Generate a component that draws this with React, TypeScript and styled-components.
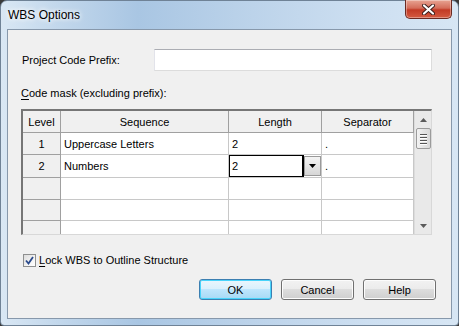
import React from "react";
import styled, { createGlobalStyle, css } from "styled-components";

const Global = createGlobalStyle`
  html, body { margin: 0; padding: 0; background: #3a3a3a; }
  body { font-family: "Liberation Sans", Arial, sans-serif; font-size: 11px; color: #000; }
  * { box-sizing: border-box; }
`;

const Window = styled.div`
  width: 459px;
  height: 326px;
  border-radius: 7px 7px 4px 4px;
  background: linear-gradient(90deg, #d9e7f4 0%, #c3d8ec 12%, #a9c6e3 30%, #bcd3ea 55%, #cddff1 80%, #d7e6f4 100%);
  border: 1px solid #6f8296;
  padding: 0 6px 6px 6px;
  display: flex;
  flex-direction: column;
`;

const TitleBar = styled.div`
  height: 28px;
  display: flex;
  justify-content: space-between;
  align-items: flex-start;
`;

const Title = styled.div`
  margin-top: 7px;
  padding-left: 1px;
  font-size: 12px;
  color: #000;
  text-shadow: 0 0 6px #fff, 0 0 4px #fff;
`;

const CloseButton = styled.div`
  width: 47px;
  height: 19px;
  margin-top: -1px;
  border: 1px solid #6b2a22;
  border-top: none;
  border-radius: 0 0 5px 5px;
  background: linear-gradient(180deg, #e8a493 0%, #d46d5a 45%, #c23a25 55%, #d45a40 100%);
  display: flex;
  align-items: center;
  justify-content: center;
  box-shadow: inset 0 0 0 1px rgba(255,255,255,0.35);
`;

const Client = styled.div`
  flex: 1;
  background: #f0f0f0;
  border: 1px solid #8798ab;
  display: flex;
  flex-direction: column;
  padding: 0 19px 0 13px;
`;

const PrefixRow = styled.div`
  margin-top: 19px;
  display: flex;
  align-items: center;
  justify-content: space-between;
  padding-left: 1px;
`;

const Label = styled.span`
  white-space: nowrap;
`;

const TextBox = styled.div`
  width: 278px;
  height: 22px;
  background: #fff;
  border: 1px solid #dcdcdc;
  border-top-color: #abadb3;
  border-left-color: #e2e3ea;
`;

const U = styled.span`
  text-decoration: underline;
  text-underline-offset: 2px;
`;

const MaskLabel = styled.div`
  margin-top: 14px;
  height: 16px;
  line-height: 16px;
`;

const GridFrame = styled.div`
  margin-top: 8px;
  width: 411px;
  height: 126px;
  border-top: 2px solid #767676;
  border-left: 2px solid #767676;
  border-right: 1px solid #d8d8d8;
  border-bottom: 1px solid #d8d8d8;
  display: flex;
  overflow: hidden;
`;

const Table = styled.div`
  display: grid;
  grid-template-columns: 38px 168px 93px 92px;
  grid-template-rows: 22px 22px 23px 22px 21px 22px;
  background: #fff;
`;

const Cell = styled.div<{ $head?: boolean; $gray?: boolean; $align?: string }>`
  border-right: 1px solid #c8c8c8;
  border-bottom: 1px solid #c8c8c8;
  display: flex;
  align-items: center;
  justify-content: ${(p) => p.$align || "flex-start"};
  padding: 0 3px;
  white-space: nowrap;
  overflow: hidden;
  position: relative;
  ${(p) =>
    (p.$head || p.$gray) &&
    css`
      background: #f0f0f0;
      border-right-color: #a0a0a0;
      border-bottom-color: #a0a0a0;
    `}
`;

const Editor = styled.div`
  position: absolute;
  inset: 0 -1px 0 0;
  display: flex;
`;

const EditBox = styled.div`
  flex: 1;
  border: 1px solid #000;
  border-right-width: 2px;
  background: #fff;
  display: flex;
  align-items: center;
  padding-left: 2px;
`;

const DropButton = styled.div`
  width: 17px;
  margin: 1px 1px 1px 0;
  border: 1px solid #9a9a9a;
  background: linear-gradient(180deg, #f4f4f4 0%, #e6e6e6 50%, #d6d6d6 100%);
  display: flex;
  align-items: center;
  justify-content: center;
`;

const ScrollBar = styled.div`
  width: 18px;
  background: #e9e9e9;
  border-left: 1px solid #dcdcdc;
  display: flex;
  flex-direction: column;
  align-items: center;
`;

const ArrowBox = styled.div`
  height: 17px;
  width: 100%;
  display: flex;
  align-items: center;
  justify-content: center;
`;

const Thumb = styled.div`
  width: 15px;
  height: 21px;
  border: 1px solid #9b9b9b;
  border-radius: 2px;
  background: linear-gradient(90deg, #f3f3f3 0%, #e4e4e4 50%, #d9d9d9 100%);
  display: flex;
  flex-direction: column;
  align-items: center;
  justify-content: center;
  gap: 2px;
`;

const Grip = styled.div`
  width: 7px;
  height: 1px;
  background: #555;
  box-shadow: 0 1px 0 #fff;
`;

const Spacer = styled.div`
  flex: 1;
`;

const CheckRow = styled.label`
  margin-top: 17px;
  height: 16px;
  display: flex;
  align-items: center;
  gap: 3px;
  padding-left: 2px;
`;

const CheckBox = styled.div`
  width: 13px;
  height: 13px;
  border: 1px solid #8e8f8f;
  background: linear-gradient(135deg, #dcdcdc 0%, #f4f4f4 60%, #ffffff 100%);
  display: flex;
  align-items: center;
  justify-content: center;
`;

const ButtonRow = styled.div`
  margin-top: 11px;
  display: flex;
  justify-content: flex-end;
  gap: 9px;
  margin-right: -4px;
`;

const Button = styled.div<{ $default?: boolean }>`
  width: 73px;
  height: 21px;
  border-radius: 3px;
  border: 1px solid #707070;
  background: linear-gradient(180deg, #f2f2f2 0%, #ebebeb 49%, #dddddd 50%, #cfcfcf 100%);
  box-shadow: inset 0 0 0 1px #fcfcfc;
  display: flex;
  align-items: center;
  justify-content: center;
  ${(p) =>
    p.$default &&
    css`
      border-color: #3c7fb1;
      background: linear-gradient(180deg, #eaf6fd 0%, #d9f0fc 49%, #bee6fd 50%, #a7d9f5 100%);
      box-shadow: inset 0 0 0 1px #48d4fb;
    `}
`;

const rows = [
  { level: "1", seq: "Uppercase Letters", len: "2", sep: "." },
  { level: "2", seq: "Numbers", len: "2", sep: ".", edit: true },
  { level: "", seq: "", len: "", sep: "" },
  { level: "", seq: "", len: "", sep: "" },
  { level: "", seq: "", len: "", sep: "" },
];

export default function App() {
  return (
    <>
      <Global />
      <Window>
        <TitleBar>
          <Title>WBS Options</Title>
          <CloseButton>
            <svg width="13" height="11" viewBox="0 0 13 11">
              <path d="M2 1.5 L11 9.5 M11 1.5 L2 9.5" stroke="#3a1d1a" strokeWidth="4" strokeLinecap="round" />
              <path d="M2 1.5 L11 9.5 M11 1.5 L2 9.5" stroke="#fff" strokeWidth="2.2" strokeLinecap="round" />
            </svg>
          </CloseButton>
        </TitleBar>
        <Client>
          <PrefixRow>
            <Label>Project Code Prefix:</Label>
            <TextBox />
          </PrefixRow>
          <MaskLabel>
            <U>C</U>ode mask (excluding prefix):
          </MaskLabel>
          <GridFrame>
            <Table>
              <Cell $head $align="center">Level</Cell>
              <Cell $head $align="center">Sequence</Cell>
              <Cell $head $align="center">Length</Cell>
              <Cell $head $align="center">Separator</Cell>
              {rows.map((r, i) => (
                <React.Fragment key={i}>
                  <Cell $gray $align="center">{r.level}</Cell>
                  <Cell>{r.seq}</Cell>
                  <Cell>
                    {r.edit ? (
                      <Editor>
                        <EditBox>{r.len}</EditBox>
                        <DropButton>
                          <svg width="7" height="4" viewBox="0 0 7 4">
                            <path d="M0 0 H7 L3.5 4 Z" fill="#000" />
                          </svg>
                        </DropButton>
                      </Editor>
                    ) : (
                      r.len
                    )}
                  </Cell>
                  <Cell>{r.sep}</Cell>
                </React.Fragment>
              ))}
            </Table>
            <ScrollBar>
              <ArrowBox>
                <svg width="7" height="4" viewBox="0 0 7 4">
                  <path d="M3.5 0 L7 4 H0 Z" fill="#5a5a5a" />
                </svg>
              </ArrowBox>
              <Thumb>
                <Grip />
                <Grip />
                <Grip />
                <Grip />
              </Thumb>
              <Spacer />
              <ArrowBox>
                <svg width="7" height="4" viewBox="0 0 7 4">
                  <path d="M0 0 H7 L3.5 4 Z" fill="#5a5a5a" />
                </svg>
              </ArrowBox>
            </ScrollBar>
          </GridFrame>
          <CheckRow>
            <CheckBox>
              <svg width="9" height="9" viewBox="0 0 9 9">
                <path d="M1 4.5 L3.5 7.5 L8 1" stroke="#2a4a8c" strokeWidth="1.8" fill="none" />
              </svg>
            </CheckBox>
            <span>
              <U>L</U>ock WBS to Outline Structure
            </span>
          </CheckRow>
          <ButtonRow>
            <Button $default>OK</Button>
            <Button>Cancel</Button>
            <Button>Help</Button>
          </ButtonRow>
        </Client>
      </Window>
    </>
  );
}
